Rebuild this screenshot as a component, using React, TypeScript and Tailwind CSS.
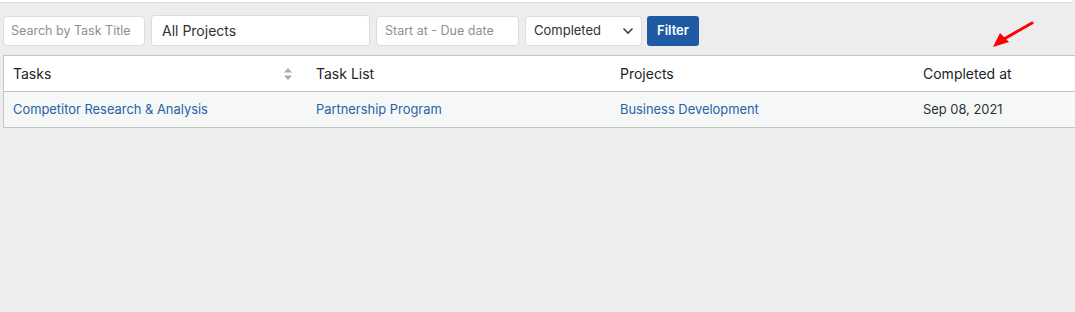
import React from 'react'

const rows = [
  {
    task: 'Competitor Research & Analysis',
    list: 'Partnership Program',
    project: 'Business Development',
    completed: 'Sep 08, 2021',
  },
]

export default function App() {
  return (
    <div
      className="relative w-full h-[312px] overflow-hidden bg-[#ededed] text-[#1d2327]"
      style={{ fontFamily: 'Inter, "Noto Sans", "Liberation Sans", sans-serif' }}
    >
      {/* top strip */}
      <div className="w-[1072px] h-[3px] bg-white border-b border-[#dcdcde]"></div>

      {/* Filters */}
      <div className="flex items-center gap-[6px] pl-[3px] mt-[12px]">
        <input
          className="w-[142px] h-[30px] px-[7px] bg-white border border-[#dcdcde] rounded-[4px] text-[12.5px] placeholder:text-[#8c8f94] outline-none"
          placeholder="Search by Task Title"
        />
        <div className="w-[219px] h-[31px] px-[10px] flex items-center bg-white border border-[#dcdcde] rounded-[3px] text-[14px] text-[#2c3338]">
          All Projects
        </div>
        <input
          className="w-[143px] h-[30px] px-[8px] bg-white border border-[#dcdcde] rounded-[4px] text-[12.5px] placeholder:text-[#8c8f94] outline-none"
          placeholder="Start at - Due date"
        />
        <div className="w-[117px] h-[30px] pl-[8px] pr-[7px] flex items-center justify-between bg-white border border-[#dcdcde] rounded-[4px] text-[13px] text-[#2c3338]">
          <span>Completed</span>
          <svg width="12" height="8" viewBox="0 0 12 8" fill="none">
            <path d="M1.5 1.5L6 6L10.5 1.5" stroke="#3c434a" strokeWidth="1.6" />
          </svg>
        </div>
        <button className="-ml-[1px] w-[52px] h-[30px] bg-[#1e5ba3] rounded-[3px] text-white text-[13px] font-semibold">
          Filter
        </button>
      </div>

      {/* Table */}
      <div className="ml-[3px] mt-[9px] w-[1090px] border border-[#c3c4c7] bg-white">
        <div className="flex h-[36px] items-center text-[14px] text-[#1d2327] border-b border-[#c3c4c7]">
          <div className="w-[303px] pl-[9px] pr-[14px] flex items-center justify-between">
            <span>Tasks</span>
            <svg width="10" height="14" viewBox="0 0 10 14">
              <path d="M5 1L9 5.5H1Z" fill="#a7aaad" />
              <path d="M5 13L9 8.5H1Z" fill="#a7aaad" />
            </svg>
          </div>
          <div className="w-[304px] pl-[9px]">Task List</div>
          <div className="w-[303px] pl-[9px]">Projects</div>
          <div className="flex-1 pl-[9px]">Completed at</div>
        </div>
        {rows.map((r) => (
          <div key={r.task} className="flex h-[35px] items-center text-[12.9px] bg-[#f6f7f7]">
            <a className="w-[303px] pl-[9px] text-[#2563a8]">{r.task}</a>
            <a className="w-[304px] pl-[9px] text-[#2563a8]">{r.list}</a>
            <a className="w-[303px] pl-[9px] text-[#2563a8]">{r.project}</a>
            <span className="flex-1 pl-[9px] text-[#2c3338]">{r.completed}</span>
          </div>
        ))}
      </div>

      {/* annotation arrow */}
      <svg className="absolute left-[990px] top-[20px]" width="46" height="30" viewBox="0 0 46 30">
        <path d="M42 3L14 19" stroke="#ff0000" strokeWidth="3" strokeLinecap="round" />
        <path d="M3 27L10 13L19 22Z" fill="#ff0000" />
      </svg>
    </div>
  )
}
